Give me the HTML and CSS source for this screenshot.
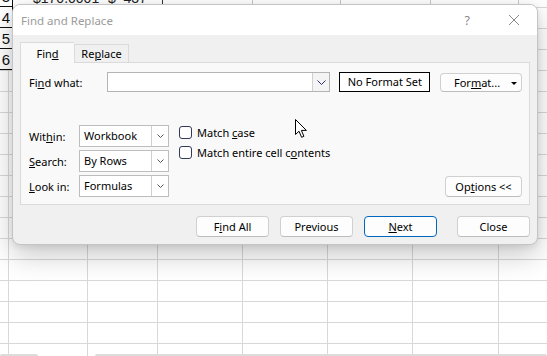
FILE: index.html
```html
<!DOCTYPE html>
<html lang="en">
<head>
    <meta charset="UTF-8">
    <meta name="viewport" content="width=device-width, initial-scale=1.0">
    <title>Find and Replace</title>
    <link rel="stylesheet" href="styles.css">
</head>
<body>
    <div class="sheet">
        <div class="cols">
            <div class="col" style="width: 8px"></div>
            <div class="col" style="width: 78px"></div>
            <div class="col" style="width: 69px"></div>
            <div class="col" style="width: 84px"></div>
            <div class="col" style="width: 84px"></div>
            <div class="col" style="width: 84px"></div>
            <div class="col" style="width: 85px"></div>
            <div class="col col-last"></div>
        </div>

        <div class="top-row">
            <div class="top-cell" style="width: 149px"><span class="amount">$170.0001</span><span class="amount amount-2">$&nbsp;&nbsp;437</span></div>
            <div class="top-cell" style="width: 89px"></div>
            <div class="top-cell" style="width: 87px"></div>
            <div class="top-cell" style="width: 89px"></div>
            <div class="top-cell" style="width: 87px"></div>
        </div>

        <div class="heads">
            <div class="head head-cut">3</div>
            <div class="head">4</div>
            <div class="head">5</div>
            <div class="head">6</div>
        </div>

        <div class="sheet-tabs">
            <div class="tab-strip tab-strip-left"></div>
            <div class="tab-strip tab-strip-right"></div>
        </div>
    </div>

    <div class="dialog">
        <div class="titlebar">
            <span class="title">Find and Replace</span>
            <span class="title-help">?</span>
            <svg class="title-close" width="12" height="12" viewBox="0 0 12 12">
                <path d="M1 1 L11 11 M11 1 L1 11" stroke="#8a8a8a" stroke-width="1" fill="none"/>
            </svg>
        </div>

        <div class="dialog-body">
            <div class="tabs">
                <div class="tab tab-active">Fin<u>d</u></div>
                <div class="tab">Re<u>p</u>lace</div>
            </div>

            <div class="panel">
                <div class="find-row">
                    <label class="find-label">Fi<u>n</u>d what:</label>
                    <div class="combo">
                        <div class="combo-text"></div>
                        <div class="combo-btn">
                            <svg width="9" height="5" viewBox="0 0 9 5"><path d="M0.5 0.5 L4.5 4.5 L8.5 0.5" stroke="#2b2f7a" fill="none"/></svg>
                        </div>
                    </div>
                    <div class="no-format">No Format Set</div>
                    <div class="btn format-btn">For<u>m</u>at...<span class="caret"></span></div>
                </div>

                <div class="options-area">
                    <div class="selects">
                        <label>Wit<u>h</u>in:</label>
                        <div class="select"><span>Workbook</span><div class="select-btn"><svg width="7" height="4" viewBox="0 0 7 4"><path d="M0.5 0.5 L3.5 3.5 L6.5 0.5" stroke="#555" fill="none"/></svg></div></div>
                        <label><u>S</u>earch:</label>
                        <div class="select"><span>By Rows</span><div class="select-btn"><svg width="7" height="4" viewBox="0 0 7 4"><path d="M0.5 0.5 L3.5 3.5 L6.5 0.5" stroke="#555" fill="none"/></svg></div></div>
                        <label><u>L</u>ook in:</label>
                        <div class="select"><span>Formulas</span><div class="select-btn"><svg width="7" height="4" viewBox="0 0 7 4"><path d="M0.5 0.5 L3.5 3.5 L6.5 0.5" stroke="#555" fill="none"/></svg></div></div>
                    </div>

                    <div class="checks">
                        <div class="check"><span class="box"></span><span>Match <u>c</u>ase</span></div>
                        <div class="check"><span class="box"></span><span>Match entire cell c<u>o</u>ntents</span></div>
                    </div>

                    <div class="btn options-btn">Op<u>t</u>ions &lt;&lt;</div>
                </div>
            </div>

            <div class="actions">
                <div class="btn action">F<u>i</u>nd All</div>
                <div class="btn action">Previous</div>
                <div class="btn action action-default"><u>N</u>ext</div>
                <div class="btn action action-close">Close</div>
            </div>
        </div>
    </div>

    <svg class="cursor" width="13" height="20" viewBox="0 0 13 20">
        <path d="M0.5 0.5 L0.5 15.5 L4 12.2 L6.6 18.3 L8.9 17.3 L6.4 11.4 L11.4 11.4 Z" fill="#fff" stroke="#000" stroke-width="1" stroke-linejoin="round"/>
    </svg>
</body>
</html>
```

FILE: styles.css
```css
body {
    margin: 0;
    width: 547px;
    height: 356px;
    overflow: hidden;
    position: relative;
    background: #fff;
    font-family: 'Noto Sans', sans-serif;
}
.sheet {
    display: grid;
    width: 547px;
    height: 356px;
    background-image: repeating-linear-gradient(to bottom, transparent 0, transparent 7px, #d8d8d8 7px, #d8d8d8 8px, transparent 8px, transparent 21px);
}
.sheet > * {
    grid-area: 1 / 1;
}
.cols {
    display: flex;
    height: 356px;
}
.col {
    flex: none;
    height: 100%;
    border-right: 1px solid #d8d8d8;
}
.col-last {
    flex: 1;
    border-right: none;
}
.top-row {
    display: flex;
    height: 7px;
    padding-left: 13px;
    background: #fff;
    align-self: start;
}
.top-cell {
    position: relative;
    flex: none;
    height: 7px;
    border-right: 1px solid #c8c8c8;
    overflow: hidden;
}
.top-cell:first-child {
    border-right-color: #333;
}
.amount {
    position: absolute;
    left: 20px;
    bottom: 2px;
    font-family: 'Liberation Sans', sans-serif;
    font-size: 14px;
    line-height: 14px;
    color: #222;
}
.amount-2 {
    left: 95px;
}
.heads {
    display: flex;
    flex-direction: column;
    align-self: start;
    width: 13px;
    margin-top: -14px;
    background: #fff;
}
.head {
    height: 20px;
    border-bottom: 1px solid #111;
    border-right: 1px solid #111;
    font-family: 'Liberation Sans', sans-serif;
    font-size: 15px;
    line-height: 22px;
    text-align: right;
    padding-right: 2px;
    color: #111;
    overflow: hidden;
}
.sheet-tabs {
    display: flex;
    align-self: end;
    height: 2px;
}
.tab-strip {
    height: 2px;
    background: #dcdcdc;
    border-radius: 2px 2px 0 0;
}
.tab-strip-left {
    width: 38px;
}
.tab-strip-right {
    flex: 1;
    margin-left: 57px;
}

/* dialog */
.dialog {
    position: absolute;
    left: 12px;
    top: 4px;
    width: 524px;
    height: 239px;
    border: 1px solid #c4c4c4;
    border-radius: 8px;
    background: #f0f0f0;
    box-shadow: 0 10px 28px rgba(0, 0, 0, 0.22), 0 2px 6px rgba(0, 0, 0, 0.08);
    overflow: hidden;
    font-size: 11px;
    color: #000;
}
.titlebar {
    height: 30px;
    background: #fff;
    display: flex;
    align-items: center;
    padding-left: 8px;
}
.title {
    flex: 1;
    color: #9b9b9b;
    font-size: 11.5px;
}
.title-help {
    color: #8a8a8a;
    font-size: 12.5px;
    margin-right: 38px;
}
.title-close {
    margin-right: 17px;
}
.dialog-body {
    padding: 7px 7px 0 7px;
}
.tabs {
    display: flex;
    align-items: flex-end;
    height: 20px;
}
.tab {
    width: 53px;
    height: 17px;
    line-height: 17px;
    text-align: center;
    border: 1px solid #dadada;
    border-bottom: none;
    background: #f0f0f0;
}
.tab-active {
    height: 20px;
    line-height: 22px;
    background: #f9f9f9;
    border-right: none;
    position: relative;
    top: 1px;
}
.panel {
    height: 143px;
    border: 1px solid #dadada;
    background: #f9f9f9;
    padding: 9px 7px 0 8px;
    box-sizing: border-box;
}
.find-row {
    display: flex;
    align-items: center;
    height: 20px;
}
.find-label {
    width: 78px;
    flex: none;
}
.combo {
    display: flex;
    width: 224px;
    height: 20px;
    box-sizing: border-box;
    border: 1px solid #b4b4b4;
    background: #fff;
}
.combo-text {
    flex: 1;
}
.combo-btn {
    width: 16px;
    border-left: 1px solid #d0d0d0;
    background: #f4f4f4;
    display: flex;
    align-items: center;
    justify-content: center;
}
.no-format {
    width: 91px;
    height: 20px;
    box-sizing: border-box;
    margin-left: 9px;
    border: 1.5px solid #000;
    background: #fff;
    text-align: center;
    line-height: 17px;
}
.btn {
    box-sizing: border-box;
    border: 1px solid #d0d0d0;
    border-bottom-color: #bdbdbd;
    border-radius: 4px;
    background: #fdfdfd;
    text-align: center;
}
.format-btn {
    position: relative;
    width: 82px;
    height: 19px;
    margin-left: 10px;
    line-height: 17px;
    padding-right: 8px;
}
.caret {
    position: absolute;
    right: 4px;
    top: 8px;
    border-left: 3px solid transparent;
    border-right: 3px solid transparent;
    border-top: 3px solid #000;
}
.options-area {
    display: flex;
    margin-top: 33px;
}
.selects {
    display: grid;
    grid-template-columns: 50px 90px;
    grid-auto-rows: 22px;
    row-gap: 3px;
    align-items: center;
}
.select {
    display: flex;
    height: 22px;
    box-sizing: border-box;
    border: 1px solid #bdbdbd;
    background: #fff;
}
.select span {
    flex: 1;
    padding-left: 4px;
    line-height: 20px;
}
.select-btn {
    width: 16px;
    border-left: 1px solid #cfcfcf;
    display: flex;
    align-items: center;
    justify-content: center;
}
.checks {
    display: flex;
    flex-direction: column;
    gap: 4px;
    margin-left: 10px;
    margin-top: -1px;
}
.check {
    display: flex;
    align-items: center;
    height: 16px;
}
.box {
    width: 11px;
    height: 11px;
    border: 1px solid #333a55;
    border-radius: 3px;
    background: #fff;
    margin-right: 5px;
}
.options-btn {
    width: 77px;
    height: 21px;
    line-height: 19px;
    margin-left: auto;
    align-self: flex-end;
}
.actions {
    display: flex;
    justify-content: flex-end;
    gap: 11px;
    margin-top: 11px;
}
.action {
    width: 73px;
    height: 21px;
    line-height: 19px;
}
.action-default {
    border-color: #0067c0;
}
.action-close {
    margin-left: 9px;
}
.cursor {
    position: absolute;
    left: 295px;
    top: 119px;
}
```
